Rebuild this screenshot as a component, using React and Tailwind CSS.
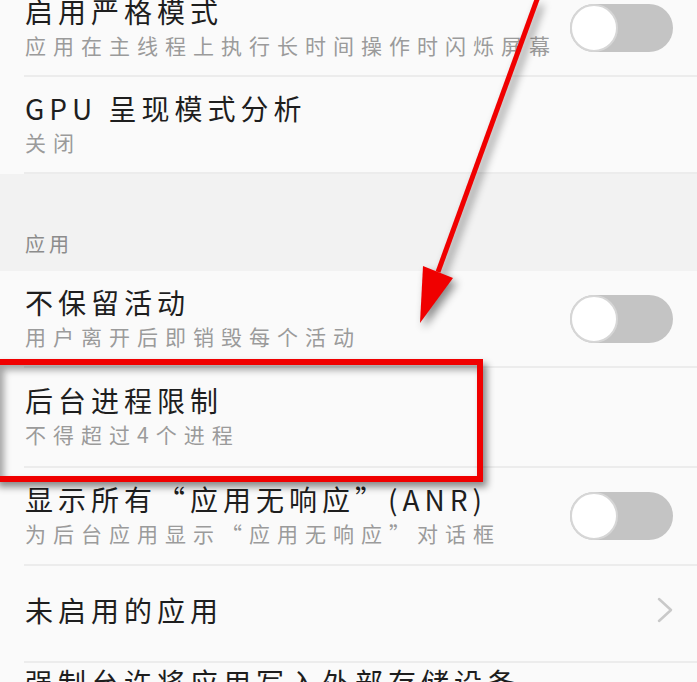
import React from "react";

const Toggle = ({ className = "" }) => (
  <div className={`relative w-[103px] h-[48px] rounded-full bg-[#c4c4c4] shrink-0 ${className}`}>
    <div className="absolute left-0 top-0 w-[48px] h-[48px] rounded-full bg-white border-2 border-[#d6d6d6]" />
  </div>
);

const Chevron = () => (
  <svg width="16" height="26" viewBox="0 0 16 26" className="shrink-0">
    <polyline
      points="2,2 14,13 2,24"
      fill="none"
      stroke="#c9c9c9"
      strokeWidth="2.5"
      strokeLinecap="round"
      strokeLinejoin="round"
    />
  </svg>
);

/**
 * One settings row: title, optional summary, optional control on the right
 */
const Row = ({ title, summary, control, className = "", alignTop = false }) => (
  <div
    className={`ml-[24px] pr-[24px] h-[97px] flex justify-between border-b-2 border-[#ececec] ${
      alignTop ? "items-start" : "items-center"
    } ${className}`}
  >
    <div className={`pl-[1px] ${alignTop ? "pt-[2px]" : ""}`}>
      <div className="text-[28px] leading-[34px] tracking-[5px] text-[#1e1e1e] whitespace-nowrap">
        {title}
      </div>
      {summary && (
        <div className="text-[21px] leading-[34px] tracking-[7px] text-[#9b9b9b] whitespace-nowrap">
          {summary}
        </div>
      )}
    </div>
    {control === "toggle" && <Toggle className={alignTop ? "mt-[23px]" : ""} />}
    {control === "chevron" && <Chevron />}
  </div>
);

const App = () => (
  <div
    className="relative w-[697px] h-[682px] overflow-hidden bg-[#fafafa]"
    style={{ fontFamily: '"Noto Sans CJK SC", "Noto Sans", sans-serif' }}
  >
    <div className="flex flex-col -mt-[20px]">
      <Row
        title="启用严格模式"
        summary="应用在主线程上执行长时间操作时闪烁屏幕"
        control="toggle"
      />
      <Row title="GPU 呈现模式分析" summary="关闭" className="border-b-0" />

      <div className="h-[97px] bg-[#f2f2f2] flex items-end pl-[25px] pb-[12px]">
        <span className="text-[20px] leading-[30px] tracking-[4px] text-[#8c8c8c]">
          应用
        </span>
      </div>

      <Row
        title="不保留活动"
        summary="用户离开后即销毁每个活动"
        control="toggle"
      />
      <Row title="后台进程限制" summary="不得超过4个进程" className="h-[100px]" />
      <Row
        title="显示所有“应用无响应”(ANR)"
        summary="为后台应用显示“应用无响应”对话框"
        control="toggle"
        className="h-[98px]"
      />
      <Row title="未启用的应用" control="chevron" className="h-[92px] pb-[8px]" />
      <Row title="强制允许将应用写入外部存储设备" control="toggle" alignTop />
    </div>

    {/* red highlight box */}
    <div className="absolute left-[-6px] top-[359px] w-[489px] h-[123px] border-[6px] border-[#f00000] shadow-[4px_5px_7px_rgba(0,0,0,0.45),inset_4px_5px_7px_rgba(0,0,0,0.35)]" />

    {/* red arrow */}
    <svg
      className="absolute left-0 top-0 pointer-events-none"
      width="697"
      height="682"
      viewBox="0 0 697 682"
      style={{ filter: "drop-shadow(4px 5px 4px rgba(0,0,0,0.45))" }}
    >
      <line x1="539" y1="-6" x2="438" y2="272" stroke="#f00000" strokeWidth="5" />
      <polygon points="420,323 423,266 453,278" fill="#f00000" />
    </svg>
  </div>
);

export default App;
